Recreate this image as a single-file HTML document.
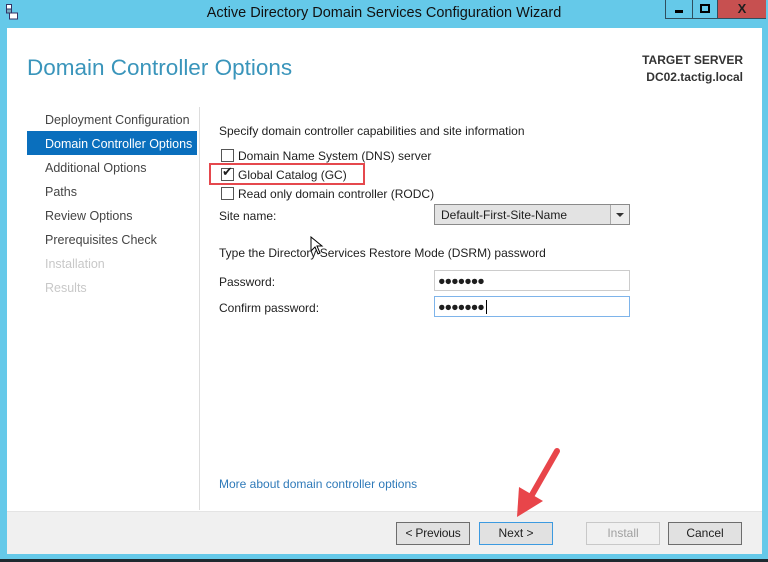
<html><head><style>
body{margin:0;width:768px;height:562px;background:#65c9e9;position:relative;overflow:hidden;font-family:"Liberation Sans",sans-serif;font-size:12px;color:#1e1e1e}
.a{position:absolute}
.nav{left:45px;color:#444;font-size:12.5px}
.cb{width:11px;height:11px;border:1px solid #555;background:#fff;left:221px}
.btn{height:21px;top:522px;border:1px solid #6d6d6d;background:#e1e1e1;text-align:center;line-height:21px;font-size:12px}
.inp{left:434px;width:196px;height:21px;border:1px solid #ccc;background:#fff;font-size:12.5px;letter-spacing:-1px;line-height:20px;padding-left:3px;box-sizing:border-box}
</style></head><body>
<div class="a" style="left:0;top:0;width:768px;height:28px;background:#65c9e9"></div>
<svg class="a" style="left:6px;top:4px" width="12" height="16"><rect x="0.5" y="0.5" width="5" height="5" fill="#fff" stroke="#336"/><rect x="0.5" y="5" width="5" height="4" fill="#7ab" stroke="#336"/><rect x="3.5" y="9" width="8" height="6" fill="#fff" stroke="#336"/></svg>
<div class="a" style="left:0;width:768px;top:5px;text-align:center;font-size:14.5px;color:#111">Active Directory Domain Services Configuration Wizard</div>
<div class="a" style="left:665px;top:0;width:26px;height:18px;border:1px solid #2f4f5f;border-top:0"><div class="a" style="left:9px;top:10px;width:8px;height:3px;background:#000"></div></div>
<div class="a" style="left:692px;top:0;width:25px;height:18px;border:1px solid #2f4f5f;border-top:0;border-left:0"><div class="a" style="left:8px;top:4px;width:6px;height:5px;border:2px solid #000"></div></div>
<div class="a" style="left:718px;top:0;width:48px;height:18px;background:#c75050;border-bottom:1px solid #2f4f5f;font-weight:bold;text-align:center;line-height:17px;font-size:13px">X</div>
<div class="a" style="left:7px;top:28px;width:755px;height:483px;background:#fff"></div>
<div class="a" style="left:7px;top:511px;width:755px;height:42px;background:#f0f0f0;border-top:1px solid #e4e4e4"></div>
<div class="a" style="left:0;top:559px;width:768px;height:3px;background:#1e2a30"></div>
<div class="a" style="left:27px;top:55px;font-size:22.5px;color:#3a95bb">Domain Controller Options</div>
<div class="a" style="right:25px;top:52px;text-align:right;font-size:12px;font-weight:bold;color:#333;line-height:17px">TARGET SERVER<br>DC02.tactig.local</div>
<div class="a" style="left:199px;top:107px;width:1px;height:403px;background:#ddd"></div>
<div class="a nav" style="top:113px">Deployment Configuration</div>
<div class="a" style="left:27px;top:131px;width:170px;height:24px;background:#0a6fbd"></div>
<div class="a nav" style="top:137px;color:#fff">Domain Controller Options</div>
<div class="a nav" style="top:161px">Additional Options</div>
<div class="a nav" style="top:185px">Paths</div>
<div class="a nav" style="top:209px">Review Options</div>
<div class="a nav" style="top:233px">Prerequisites Check</div>
<div class="a nav" style="top:257px;color:#c8c8c8">Installation</div>
<div class="a nav" style="top:281px;color:#c8c8c8">Results</div>
<div class="a" style="left:219px;top:124px">Specify domain controller capabilities and site information</div>
<div class="a cb" style="top:149px"></div><div class="a" style="left:238px;top:149px">Domain Name System (DNS) server</div>
<div class="a cb" style="top:168px"></div><div class="a" style="left:222px;top:164px;font-size:13px">✔</div><div class="a" style="left:238px;top:168px">Global Catalog (GC)</div>
<div class="a" style="left:209px;top:163px;width:152px;height:18px;border:2px solid #e5484d"></div>
<div class="a cb" style="top:187px"></div><div class="a" style="left:238px;top:187px">Read only domain controller (RODC)</div>
<div class="a" style="left:219px;top:209px">Site name:</div>
<div class="a" style="left:434px;top:204px;width:196px;height:21px;border:1px solid #8a8a8a;background:#e3e3e3;box-sizing:border-box"><div class="a" style="left:6px;top:3px">Default-First-Site-Name</div><div class="a" style="right:0;top:0;width:18px;height:19px;border-left:1px solid #aaa;background:#ececec"></div><div class="a" style="right:5px;top:8px;border:4px solid transparent;border-top:4px solid #333"></div></div>
<svg class="a" style="left:310px;top:236px" width="14" height="20"><path d="M1 1 L1 15 L5 11 L8 18 L10 17 L7 10 L12 10 Z" fill="#fff" stroke="#000"/></svg>
<div class="a" style="left:219px;top:246px">Type the Directory Services Restore Mode (DSRM) password</div>
<div class="a" style="left:219px;top:275px">Password:</div>
<div class="a inp" style="top:270px">●●●●●●●</div>
<div class="a" style="left:219px;top:301px">Confirm password:</div>
<div class="a inp" style="top:296px;border-color:#7eb4ea">●●●●●●●<span style="border-left:1px solid #000;margin-left:2px"></span></div>
<div class="a" style="left:219px;top:477px;color:#2f7ab9">More about domain controller options</div>
<div class="a btn" style="left:396px;width:72px;letter-spacing:-0.2px">&lt; Previous</div>
<div class="a btn" style="left:479px;width:72px;border-color:#3c9ae0">Next &gt;</div>
<div class="a btn" style="left:586px;width:72px;border-color:#c8c8c8;background:#f0f0f0;color:#a0a0a0">Install</div>
<div class="a btn" style="left:668px;width:72px">Cancel</div>
<svg class="a" style="left:505px;top:445px" width="60" height="75"><path d="M52 6 L24 55" stroke="#e8454a" stroke-width="6" stroke-linecap="round"/><path d="M12 72 L14 42 L38 56 Z" fill="#e8454a"/></svg>
</body></html>
